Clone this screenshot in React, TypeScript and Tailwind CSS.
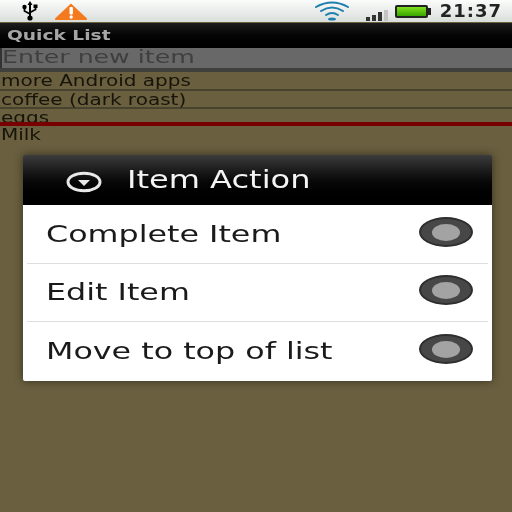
const actions = ["Complete Item", "Edit Item", "Move to top of list"];

const font = "font-['DejaVu_Sans',sans-serif]";

const UsbIcon = () => (
  <svg width="20" height="22" viewBox="0 0 20 22" className="text-black">
    <path d="M10 1 L7.5 5 H9 V16 H11 V5 H12.5 Z" fill="currentColor" />
    <path d="M10 14 L4.5 11 V8" stroke="currentColor" strokeWidth="1.8" fill="none" />
    <path d="M10 12.5 L15.5 9.5 V7" stroke="currentColor" strokeWidth="1.8" fill="none" />
    <circle cx="4.5" cy="7" r="2.2" fill="currentColor" />
    <rect x="13.5" y="4.5" width="4" height="3.5" fill="currentColor" />
    <circle cx="10" cy="18" r="2.6" fill="currentColor" />
  </svg>
);

const WarningIcon = () => (
  <svg width="34" height="17" viewBox="0 0 34 17">
    <path d="M17 0.5 L33 15.5 Q33.5 17 32 17 H2 Q0.5 17 1 15.5 Z" fill="#f47a1f" />
    <rect x="15.5" y="4" width="3.4" height="7.5" rx="1" fill="#fff" />
    <circle cx="17.2" cy="14" r="1.7" fill="#fff" />
  </svg>
);

const WifiIcon = () => (
  <svg width="36" height="20" viewBox="0 0 36 20" fill="none" stroke="#1c7fb0" strokeLinecap="round">
    <path d="M2 6 Q18 -3 34 6" strokeWidth="2" />
    <path d="M7 10 Q18 3 29 10" strokeWidth="2" />
    <path d="M12 14 Q18 10 24 14" strokeWidth="2" />
    <ellipse cx="18" cy="18" rx="4" ry="1.6" fill="#1c7fb0" stroke="none" />
  </svg>
);

const SignalIcon = () => (
  <div className="flex items-end gap-[2px] h-[13px] mt-[6px]">
    <div className="w-[4px] h-[4px] bg-[#333]" />
    <div className="w-[4px] h-[6px] bg-[#333]" />
    <div className="w-[4px] h-[9px] bg-[#333]" />
    <div className="w-[4px] h-[11px] bg-[#c4c4c4]" />
  </div>
);

const Battery = () => (
  <div className="flex items-center">
    <div className="w-[33px] h-[13px] rounded-[2px] bg-[#222] p-[2px]">
      <div className="w-full h-full bg-gradient-to-b from-[#7ee01c] to-[#35a600]" />
    </div>
    <div className="w-[3px] h-[7px] bg-[#222]" />
  </div>
);

const Row = ({ text, h }: { text: string; h: string }) => (
  <div className={`${h} pl-[1px] text-[15.5px] leading-[19px] text-[#17140a] whitespace-nowrap`}>
    <span className="inline-block origin-left scale-x-[1.29]">{text}</span>
  </div>
);

export default function App() {
  return (
    <div className={`relative w-[512px] h-[512px] overflow-hidden bg-[#6a5f3f] ${font}`}>
      <div className="blur-[0.4px]">
        {/* status bar */}
        <div className="h-[22px] flex items-center bg-gradient-to-b from-[#fbfcfb] to-[#d9dedb]">
          <div className="ml-[20px]">
            <UsbIcon />
          </div>
          <div className="ml-[14px]">
            <WarningIcon />
          </div>
          <div className="ml-auto flex items-center">
            <WifiIcon />
            <div className="ml-[16px]">
              <SignalIcon />
            </div>
            <div className="ml-[7px]">
              <Battery />
            </div>
            <span className="ml-[9px] mr-[10px] font-bold text-[18px] leading-[22px] tracking-[1px] text-[#222]">21:37</span>
          </div>
        </div>

        {/* title */}
        <div className="h-[25px] mt-[1px] bg-gradient-to-b from-[#1c1c1c] via-[#050505] to-black flex items-center pl-[7px] font-bold text-[14px] text-[#a6a6a6]">
          <span className="inline-block origin-left scale-x-[1.33]">Quick List</span>
        </div>

        {/* input */}
        <div className="h-[20px] bg-[#686868] text-[#3f3f3f] text-[18px] leading-[18px] border-l-2 border-[#333] whitespace-nowrap">
          <span className="inline-block origin-left scale-x-[1.4]">Enter new item</span>
        </div>
        <div className="h-[4px] bg-[#3f3f3c]" />

        {/* list */}
        <div>
          <div className="border-b-2 border-[#48432f]">
            <Row text="more Android apps" h="h-[17px]" />
          </div>
          <div className="border-b-2 border-[#48432f]">
            <Row text="coffee (dark roast)" h="h-[16px]" />
          </div>
          <Row text="eggs" h="h-[13px]" />
          <div className="h-[4px] bg-[#780000] relative" />
          <Row text="Milk" h="h-[18px]" />
        </div>
      </div>

      {/* dialog */}
      <div className="absolute left-[23px] top-[155px] w-[469px] rounded-[2px] overflow-hidden shadow-[0_0_8px_rgba(30,28,15,0.7)] blur-[0.4px]">
        <div className="h-[50px] bg-gradient-to-b from-[#3c3c3c] via-[#0a0a0a] to-black flex items-center pl-[43px] text-white">
          <svg width="36" height="26" viewBox="0 0 36 26" fill="none">
            <ellipse cx="18" cy="15" rx="16" ry="8.8" stroke="#e8e8e8" strokeWidth="3" />
            <path d="M12 13 H24 L18 19 Z" fill="#e8e8e8" />
          </svg>
          <span className="ml-[25px] text-[24px] text-[#f4f4f4] inline-block origin-left scale-x-[1.335] whitespace-nowrap">Item Action</span>
        </div>
        <div className="bg-white">
          {actions.map((a, i) => (
            <div
              key={a}
              className={`${i === 2 ? "h-[60px]" : "h-[58px]"} flex items-center justify-between pl-[23px] pr-[19px]`}
            >
              <span className="text-[23px] text-[#1a1a1a] inline-block origin-left scale-x-[1.38] whitespace-nowrap">{a}</span>
              <div className="w-[54px] h-[30px] mb-[4px] rounded-[50%] bg-[#474747] border-2 border-[#2e2e2e] flex items-center justify-center">
                <div className="w-[28px] h-[17px] rounded-[50%] bg-[#a3a3a3]" />
              </div>
            </div>
          ))}
        </div>
        <div className="absolute left-[4px] right-[4px] top-[108px] h-[1px] bg-[#dedede]" />
        <div className="absolute left-[4px] right-[4px] top-[166px] h-[1px] bg-[#dedede]" />
      </div>
    </div>
  );
}
